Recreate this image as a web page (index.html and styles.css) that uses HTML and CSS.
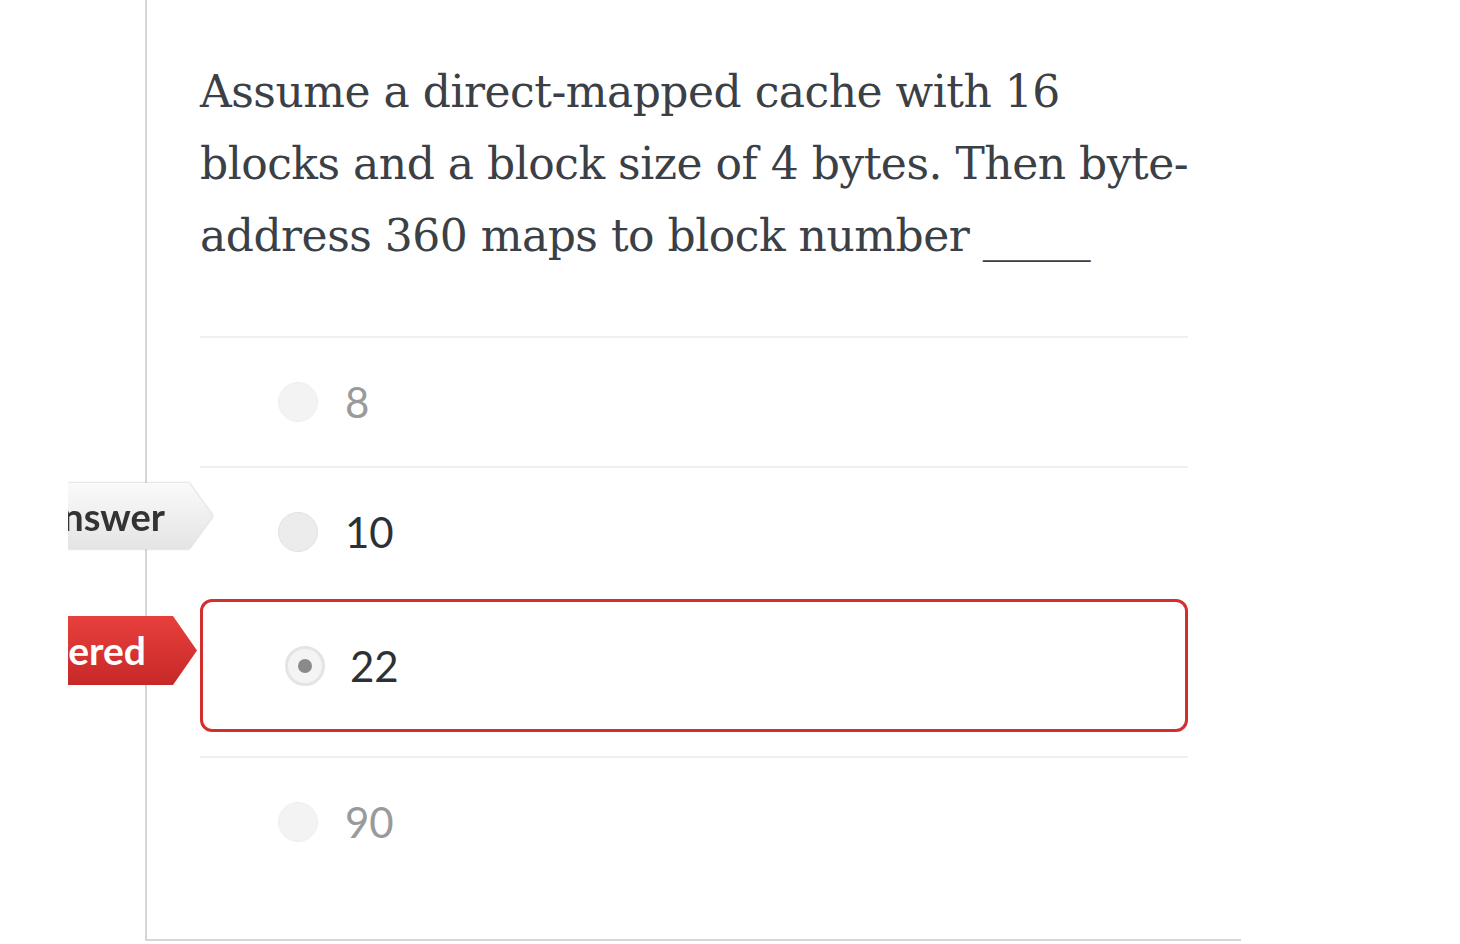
FILE: index.html
```html
<!DOCTYPE html>
<html lang="en">
<head>
    <meta charset="UTF-8">
    <title>Quiz question</title>
    <link rel="stylesheet" href="styles.css">
</head>
<body>
    <div class="page">
        <div class="viewport">
            <div class="question">
                <p class="question-text">Assume a direct-mapped cache with 16<br>blocks and a block size of 4 bytes. Then byte-<br>address 360 maps to block number _____</p>

                <div class="answers">
                    <div class="answer faded">
                        <span class="radio"></span>
                        <span class="answer-label">8</span>
                    </div>
                    <div class="answer">
                        <div class="tag tag-correct"><span>Correct Answer</span></div>
                        <span class="radio"></span>
                        <span class="answer-label">10</span>
                    </div>
                    <div class="answer selected">
                        <div class="tag tag-wrong"><span>You Answered</span></div>
                        <span class="radio checked"></span>
                        <span class="answer-label">22</span>
                    </div>
                    <div class="answer faded">
                        <span class="radio"></span>
                        <span class="answer-label">90</span>
                    </div>
                </div>
            </div>
        </div>
    </div>
</body>
</html>
```

FILE: styles.css
```css
body {
    margin: 0;
    background: #fff;
}
.page {
    padding-left: 68px;
}
.viewport {
    overflow: hidden;
    padding-left: 77px;
}
.question {
    width: 988px;
    height: 939px;
    padding: 0 53px;
    border-left: 2px solid #d6d6d6;
    border-bottom: 2px solid #d6d6d6;
}
.question-text {
    margin: 0 -40px 0 0;
    padding-top: 56px;
    font-family: "DejaVu Serif", "Liberation Serif", serif;
    font-size: 44px;
    line-height: 72px;
    color: #3b4046;
    letter-spacing: -0.5px;
    white-space: nowrap;
}
.answers {
    margin-top: 64px;
}
.answer {
    position: relative;
    display: flex;
    align-items: center;
    height: 128px;
    padding-left: 78px;
    border-top: 2px solid #f0f0f0;
    font-family: Lato, "Open Sans", sans-serif;
    font-size: 42px;
    color: #2d3135;
}
.answer.faded {
    color: #9a9a9a;
}
.answer.faded .radio {
    opacity: 0.6;
}
.answer.selected {
    height: 127px;
    margin-top: 3px;
    margin-bottom: 24px;
    padding-left: 82px;
    border: 3px solid #d32f2f;
    border-radius: 12px;
}
.answer.selected .answer-label {
    margin-left: 25px;
}
.answer-label {
    margin-left: 27px;
}
.radio {
    width: 40px;
    height: 40px;
    border-radius: 50%;
    background: #ececec;
    border: 1px solid #e2e2e2;
    box-sizing: border-box;
}
.radio.checked {
    position: relative;
    background: #f4f4f4;
    border: 3px solid #e4e4e4;
}
.radio.checked::after {
    content: "";
    position: absolute;
    left: 10px;
    top: 10px;
    width: 14px;
    height: 14px;
    border-radius: 50%;
    background: #8a8a8a;
}
.tag {
    position: absolute;
    top: 15px;
    filter: drop-shadow(0 0 1px #b9b9b9);
}
.tag span {
    display: block;
    height: 66px;
    line-height: 66px;
    padding: 0 48px 0 30px;
    white-space: nowrap;
    font-family: Lato, "Open Sans", sans-serif;
    font-weight: bold;
    font-size: 38px;
    clip-path: polygon(0 0, calc(100% - 24px) 0, 100% 50%, calc(100% - 24px) 100%, 0 100%);
}
.tag-correct {
    right: calc(100% - 13px);
}
.tag-correct span {
    color: #333;
    background: linear-gradient(#fafafa, #e4e4e4);
}
.tag-wrong {
    top: 14px;
    right: calc(100% + 6px);
    filter: none;
}
.tag-wrong span {
    height: 69px;
    line-height: 69px;
    padding-right: 51px;
    font-size: 39px;
    color: #fff;
    background: linear-gradient(#e8403c, #c62828);
}
```
